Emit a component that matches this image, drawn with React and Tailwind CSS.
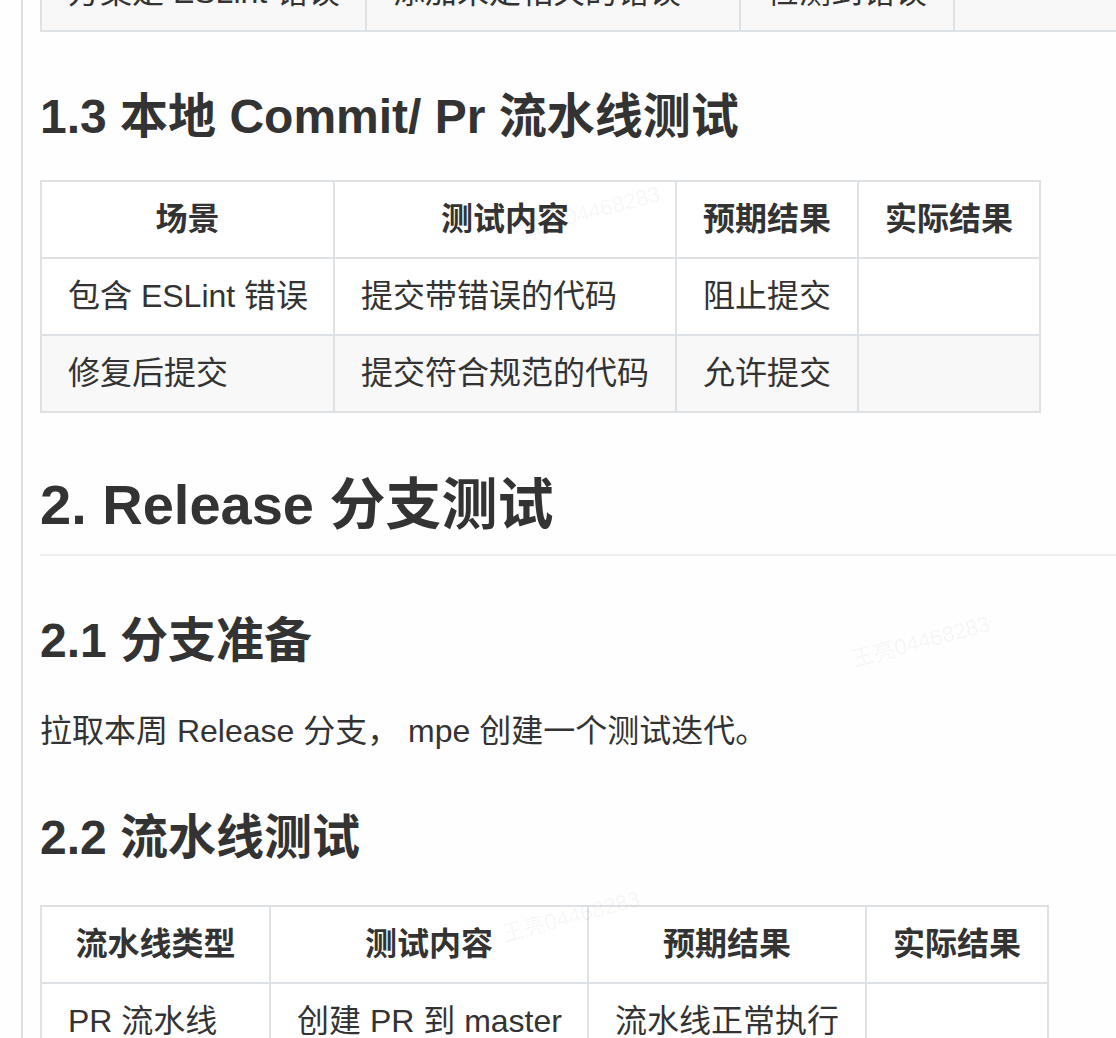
const font = "font-['Liberation_Sans','Noto_Sans_CJK_SC',sans-serif]";

const Table = ({ cols, header, rows, className = "" }) => (
  <div
    className={`grid w-max border-l-2 border-t-2 border-[#dfe2e5] ${className}`}
    style={{ gridTemplateColumns: cols.map((c) => `${c}px`).join(" ") }}
  >
    {header &&
      header.map((h, i) => (
        <div
          key={"h" + i}
          className="border-r-2 border-b-2 border-[#dfe2e5] bg-white px-[26px] py-[12px] text-center text-[32px] font-bold leading-[51px] whitespace-nowrap"
        >
          {h}
        </div>
      ))}
    {rows.map((row, r) =>
      row.cells.map((c, i) => (
        <div
          key={r + "-" + i}
          className={`border-r-2 border-b-2 border-[#dfe2e5] px-[26px] py-[12px] text-[32px] leading-[51px] whitespace-nowrap overflow-hidden ${
            row.striped ? "bg-[#f8f8f8]" : "bg-white"
          }`}
        >
          {c || "\u00a0"}
        </div>
      ))
    )}
  </div>
);

const Watermark = ({ text, className }) => (
  <span
    className={`pointer-events-none absolute whitespace-nowrap text-[22px] text-black/[0.05] ${className}`}
  >
    {text}
  </span>
);

export default function App() {
  return (
    <div className={`relative h-[1038px] w-full overflow-hidden bg-[#fefefe] text-[#333] ${font}`}>
      <div className="ml-[21px] flex h-full flex-col border-l-2 border-[#dedede] pl-[17px]">
        <div className="flex w-[1200px] flex-col items-start">
          <Table
            className="-mt-[47px]"
            cols={[325, 374, 214, 300]}
            rows={[{ striped: true, cells: ["方案是 ESLint 错误", "添加未定相关的错误", "检测到错误", ""] }]}
          />

          <h3 className="mt-[51px] text-[48px] font-bold leading-[68px]">1.3 本地 Commit/ Pr 流水线测试</h3>

          <Table
            className="mt-[29px]"
            cols={[293, 342, 182, 182]}
            header={["场景", "测试内容", "预期结果", "实际结果"]}
            rows={[
              { cells: ["包含 ESLint 错误", "提交带错误的代码", "阻止提交", ""] },
              { striped: true, cells: ["修复后提交", "提交符合规范的代码", "允许提交", ""] },
            ]}
          />

          <h2 className="mt-[53px] w-full border-b-2 border-[#eeeeee] pb-[10px] text-[56px] font-bold leading-[78px]">
            2. Release 分支测试
          </h2>

          <h3 className="mt-[51px] text-[48px] font-bold leading-[68px]">2.1 分支准备</h3>

          <p className="mt-[31px] text-[32px] leading-[51px]">拉取本周 Release 分支， mpe 创建一个测试迭代。</p>

          <h3 className="mt-[47px] text-[48px] font-bold leading-[68px]">2.2 流水线测试</h3>

          <Table
            className="mt-[33px]"
            cols={[229, 318, 278, 182]}
            header={["流水线类型", "测试内容", "预期结果", "实际结果"]}
            rows={[{ cells: ["PR 流水线", "创建 PR 到 master", "流水线正常执行", ""] }]}
          />
        </div>
      </div>

      <Watermark text="王亮04468283" className="left-[520px] top-[195px] -rotate-[15deg]" />
      <Watermark text="王亮04468283" className="left-[850px] top-[625px] -rotate-[15deg]" />
      <Watermark text="王亮04468283" className="left-[500px] top-[900px] -rotate-[15deg]" />
    </div>
  );
}
